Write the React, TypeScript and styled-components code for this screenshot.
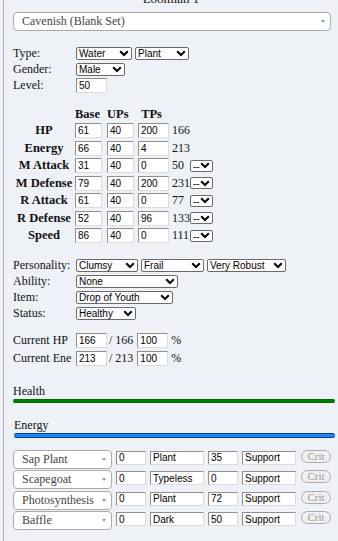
import { FC } from 'react';
import styled, { createGlobalStyle } from 'styled-components';

const GlobalStyle = createGlobalStyle`
  body {
    margin: 0;
    background: #eef2f7;
    font-family: "Liberation Serif", "Times New Roman", serif;
    font-size: 12px;
    color: #111;
  }
`;

const Panel = styled.div`
  margin-top: -9px;
  margin-left: 3px;
  border-left: 1px solid #aaa;
  padding: 0 3px 20px 9px;
  min-height: 560px;
  box-sizing: border-box;
`;

const Title = styled.div`
  height: 16px;
  line-height: 16px;
  font-size: 13px;
  text-align: center;
  padding-right: 6px;
`;

const FancySelect = styled.div<{ $w: number }>`
  box-sizing: border-box;
  width: ${(p) => p.$w}px;
  height: 19px;
  display: flex;
  align-items: center;
  padding-left: 8px;
  background: #fff;
  border: 1px solid #aaa;
  border-radius: 4px;
  color: #444;
  font-size: 12px;
  flex-shrink: 0;
`;

const Caret = styled.span`
  margin-left: auto;
  margin-right: 5px;
  border-style: solid;
  border-width: 3px 2.5px 0;
  border-color: #999 transparent transparent;
`;

const TopSelect = styled(FancySelect)`
  margin-top: 5px;
`;

const Fields = styled.div<{ $top: number }>`
  margin-top: ${(p) => p.$top}px;
`;

const Row = styled.div<{ $h?: number }>`
  display: flex;
  align-items: center;
  gap: 3px;
  height: ${(p) => p.$h ?? 16}px;
`;

const Label = styled.span`
  width: 60px;
  flex-shrink: 0;
  white-space: nowrap;
`;

const DropBox = styled.span<{ $w: number; $h?: number }>`
  box-sizing: border-box;
  display: inline-flex;
  align-items: center;
  flex-shrink: 0;
  width: ${(p) => p.$w}px;
  height: ${(p) => p.$h ?? 13}px;
  border: 1px solid #6a6a6a;
  border-radius: 2px;
  background: #fff;
`;

const DropNative = styled.select`
  appearance: none;
  flex: 1;
  min-width: 0;
  height: 100%;
  margin: 0;
  padding: 0 0 0 2px;
  border: 0;
  background: transparent;
  font-family: "Liberation Sans", Arial, sans-serif;
  font-size: 10px;
  color: #000;
  outline: none;
`;

const Chevron = styled.svg`
  flex-shrink: 0;
  margin-right: 2px;
`;

const Dropdown: FC<{ w: number; h?: number; value: string }> = ({ w, h, value }) => (
  <DropBox $w={w} $h={h}>
    <DropNative defaultValue={value}>
      <option>{value}</option>
    </DropNative>
    <Chevron width="10" height="7" viewBox="0 0 10 7">
      <polyline points="1.2,1.2 5,5 8.8,1.2" fill="none" stroke="#000" strokeWidth="2" />
    </Chevron>
  </DropBox>
);

const Input = styled.input<{ $w: number; $h?: number }>`
  box-sizing: border-box;
  width: ${(p) => p.$w}px;
  height: ${(p) => p.$h ?? 15}px;
  padding: 0 0 0 2px;
  margin: 0;
  border: 1px solid;
  border-color: #8f8f8f #dcdcdc #dcdcdc #8f8f8f;
  background: #fff;
  font-family: "Liberation Sans", Arial, sans-serif;
  font-size: 10px;
  color: #000;
  outline: none;
  flex-shrink: 0;
`;

const StatGrid = styled.div`
  margin-top: 13px;
  display: grid;
  grid-template-columns: 62px 32px 31px 34px 18px auto;
  grid-template-rows: 16px;
  grid-auto-rows: 17.5px;
  align-items: center;
`;

const Head = styled.span<{ $align?: string }>`
  font-weight: bold;
  font-size: 12.5px;
  text-align: ${(p) => p.$align ?? 'center'};
  white-space: nowrap;
`;

const Total = styled.span`
  font-size: 12px;
`;

const Slash = styled.span`
  margin: 0 1px 0 -1px;
`;

const BarLabel = styled.div<{ $top: number; $indent?: number }>`
  margin-top: ${(p) => p.$top}px;
  margin-left: ${(p) => p.$indent ?? 0}px;
  line-height: 14px;
`;

const Bar = styled.div<{ $color: string; $edge: string; $h: number; $indent?: number }>`
  margin-top: 1px;
  margin-left: ${(p) => p.$indent ?? 0}px;
  height: ${(p) => p.$h}px;
  box-sizing: border-box;
  background: ${(p) => p.$color};
  border-top: 1px solid ${(p) => p.$edge};
  border-bottom: 1px solid ${(p) => p.$edge};
  border-radius: 3px;
`;

const Moves = styled.div`
  margin-top: 12px;
`;

const MoveRow = styled.div`
  display: flex;
  align-items: flex-start;
  gap: 4px;
  height: 20.67px;
`;

const MoveInput = styled(Input)`
  margin-top: 1px;
`;

const Crit = styled.button`
  box-sizing: border-box;
  width: 30px;
  height: 13px;
  margin-left: 1px;
  padding: 0;
  border: 1px solid #aaa;
  border-radius: 7px;
  background: #f0f0f0;
  color: #999;
  font-family: "Liberation Serif", serif;
  font-size: 11px;
  line-height: 11px;
`;

const stats = [
  { name: 'HP', base: 61, tp: 200, total: 166, mod: false },
  { name: 'Energy', base: 66, tp: 4, total: 213, mod: false },
  { name: 'M Attack', base: 31, tp: 0, total: 50, mod: true },
  { name: 'M Defense', base: 79, tp: 200, total: 231, mod: true },
  { name: 'R Attack', base: 61, tp: 0, total: 77, mod: true },
  { name: 'R Defense', base: 52, tp: 96, total: 133, mod: true },
  { name: 'Speed', base: 86, tp: 0, total: 111, mod: true },
];

const moves = [
  { name: 'Sap Plant', type: 'Plant', power: 35 },
  { name: 'Scapegoat', type: 'Typeless', power: 0 },
  { name: 'Photosynthesis', type: 'Plant', power: 72 },
  { name: 'Baffle', type: 'Dark', power: 50 },
];

const App: FC = () => {
  return (
    <>
      <GlobalStyle />
      <Panel>
        <Title>Loomian 1</Title>
        <TopSelect $w={318}>
          Cavenish (Blank Set)
          <Caret />
        </TopSelect>

        <Fields $top={14}>
          <Row>
            <Label>Type:</Label>
            <Dropdown w={56} value="Water" />
            <Dropdown w={54} value="Plant" />
          </Row>
          <Row>
            <Label>Gender:</Label>
            <Dropdown w={49} value="Male" />
          </Row>
          <Row>
            <Label>Level:</Label>
            <Input $w={31} defaultValue="50" />
          </Row>
        </Fields>

        <StatGrid>
          <span />
          <Head $align="left">Base</Head>
          <Head $align="left">UPs</Head>
          <Head $align="left">&nbsp;TPs</Head>
          <span />
          <span />
          {stats.map((s) => (
            <>
              <Head key={s.name}>{s.name}</Head>
              <Input $w={27} defaultValue={s.base} />
              <Input $w={27} defaultValue={40} />
              <Input $w={31} defaultValue={s.tp} />
              <Total>{s.total}</Total>
              {s.mod ? <Dropdown w={23} h={12} value="--" /> : <span />}
            </>
          ))}
        </StatGrid>

        <Fields $top={13}>
          <Row>
            <Label>Personality:</Label>
            <Dropdown w={62} value="Clumsy" />
            <Dropdown w={63} value="Frail" />
            <Dropdown w={79} value="Very Robust" />
          </Row>
          <Row>
            <Label>Ability:</Label>
            <Dropdown w={102} value="None" />
          </Row>
          <Row>
            <Label>Item:</Label>
            <Dropdown w={97} value="Drop of Youth" />
          </Row>
          <Row>
            <Label>Status:</Label>
            <Dropdown w={60} value="Healthy" />
          </Row>
        </Fields>

        <Fields $top={10}>
          <Row $h={18}>
            <Label>Current HP</Label>
            <Input $w={31} defaultValue="166" />
            <Slash>/ 166</Slash>
            <Input $w={31} defaultValue="100" />
            <span>%</span>
          </Row>
          <Row $h={18}>
            <Label>Current Ene</Label>
            <Input $w={31} defaultValue="213" />
            <Slash>/ 213</Slash>
            <Input $w={31} defaultValue="100" />
            <span>%</span>
          </Row>
        </Fields>

        <BarLabel $top={16}>Health</BarLabel>
        <Bar $color="#008000" $edge="#006a00" $h={4} />
        <BarLabel $top={15} $indent={1}>
          Energy
        </BarLabel>
        <Bar $color="#1e88f5" $edge="#0a3c8c" $h={5} $indent={1} />

        <Moves>
          {moves.map((m) => (
            <MoveRow key={m.name}>
              <FancySelect $w={99}>
                {m.name}
                <Caret />
              </FancySelect>
              <MoveInput $w={30} $h={14} defaultValue="0" />
              <MoveInput $w={54} $h={14} defaultValue={m.type} />
              <MoveInput $w={30} $h={14} defaultValue={m.power} />
              <MoveInput $w={54} $h={14} defaultValue="Support" />
              <Crit disabled>Crit</Crit>
            </MoveRow>
          ))}
        </Moves>
      </Panel>
    </>
  );
};

export default App;
